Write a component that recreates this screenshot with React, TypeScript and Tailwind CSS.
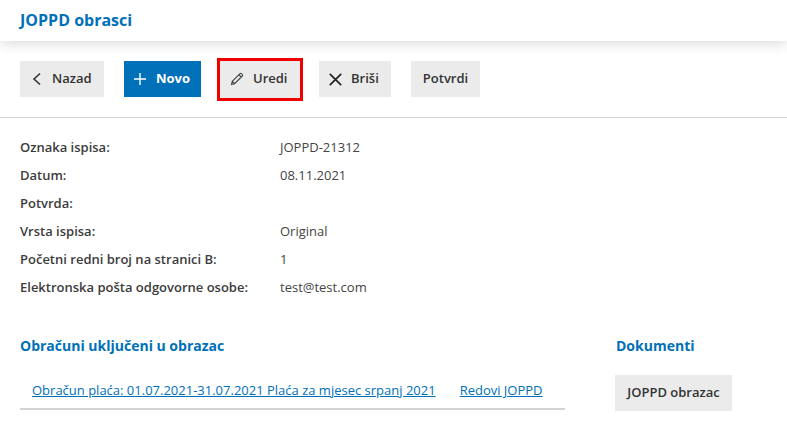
import React from "react";

const rows: [string, string][] = [
  ["Oznaka ispisa:", "JOPPD-21312"],
  ["Datum:", "08.11.2021"],
  ["Potvrda:", ""],
  ["Vrsta ispisa:", "Original"],
  ["Početni redni broj na stranici B:", "1"],
  ["Elektronska pošta odgovorne osobe:", "test@test.com"],
];

export default function App() {
  return (
    <div className="w-[787px] h-[441px] overflow-hidden bg-white text-[13px] text-[#333] font-['Open_Sans',sans-serif]">
      <header className="h-[41px] pl-5 pb-[2px] flex items-center bg-white shadow-[0_2px_14px_rgba(0,0,0,0.16)]">
        <h1 className="text-[16px] leading-none font-bold text-[#0070b8]">JOPPD obrasci</h1>
      </header>

      <div className="h-[77px] pl-5 flex items-center border-b border-[#d2d2d2]">
        <button className="h-9 w-[84px] mr-5 flex items-center pl-[12px] bg-[#ebebeb] font-semibold text-[#333]">
          <svg width="10" height="14" viewBox="0 0 10 14" fill="none" stroke="#333" strokeWidth="1.6" className="mr-[10px]">
            <path d="M8 1.5 2 7l6 5.5" />
          </svg>
          Nazad
        </button>
        <button className="h-9 w-[77px] mr-[16px] flex items-center pl-[10px] bg-[#0070b8] font-bold text-white">
          <svg width="12" height="12" viewBox="0 0 12 12" fill="none" stroke="#fff" strokeWidth="1.4" className="mr-[10px]">
            <path d="M6 0v12M0 6h12" />
          </svg>
          Novo
        </button>
        <div className="border-[3px] border-[#ee0000] mr-[16px]">
          <button className="h-[37px] w-[80px] flex items-center pl-[10px] bg-[#ebebeb] font-semibold text-[#333]">
            <svg width="14" height="14" viewBox="0 0 14 14" fill="none" stroke="#444" strokeWidth="1.1" className="mr-[9px]">
              <path d="M1.5 12.5 2.3 9.4 10 1.7a1 1 0 0 1 1.4 0l.9.9a1 1 0 0 1 0 1.4L4.6 11.7zM2.3 9.4l2.3 2.3M9 2.8l2.2 2.2" />
            </svg>
            Uredi
          </button>
        </div>
        <button className="h-9 w-[72px] mr-5 flex items-center pl-[10px] bg-[#ebebeb] font-semibold text-[#333]">
          <svg width="13" height="13" viewBox="0 0 13 13" fill="none" stroke="#222" strokeWidth="1.7" className="mr-[9px]">
            <path d="M.8.8l11.4 11.4M12.2.8.8 12.2" />
          </svg>
          Briši
        </button>
        <button className="h-9 w-[69px] flex items-center justify-center bg-[#ebebeb] font-semibold text-[#333]">
          Potvrdi
        </button>
      </div>

      <div className="pl-5 pt-4">
        {rows.map(([label, value]) => (
          <div key={label} className="h-7 flex items-center">
            <div className="w-[260px] font-semibold text-[#3c3c3c]">{label}</div>
            <div className="text-[#444]">{value}</div>
          </div>
        ))}
      </div>

      <div className="pl-5 pt-[33px] flex">
        <div className="w-[545px] mr-[50px]">
          <h2 className="h-[20px] flex items-center text-[14px] font-bold text-[#0070b8]">Obračuni uključeni u obrazac</h2>
          <div className="mt-[18px] h-[37px] pl-3 flex items-start border-b-[2px] border-[#d2d2d2]">
            <a className="mt-[8px] font-medium underline text-[#0070b8] mr-[24px]">Obračun plaća: 01.07.2021-31.07.2021 Plaća za mjesec srpanj 2021</a>
            <a className="mt-[8px] font-medium underline text-[#0070b8]">Redovi JOPPD</a>
          </div>
        </div>
        <div>
          <h2 className="h-[20px] pl-px flex items-center text-[14px] font-bold text-[#0070b8]">Dokumenti</h2>
          <button className="mt-[20px] h-9 w-[117px] flex items-center justify-center bg-[#ebebeb] font-semibold text-[#333]">
            JOPPD obrazac
          </button>
        </div>
      </div>
    </div>
  );
}
